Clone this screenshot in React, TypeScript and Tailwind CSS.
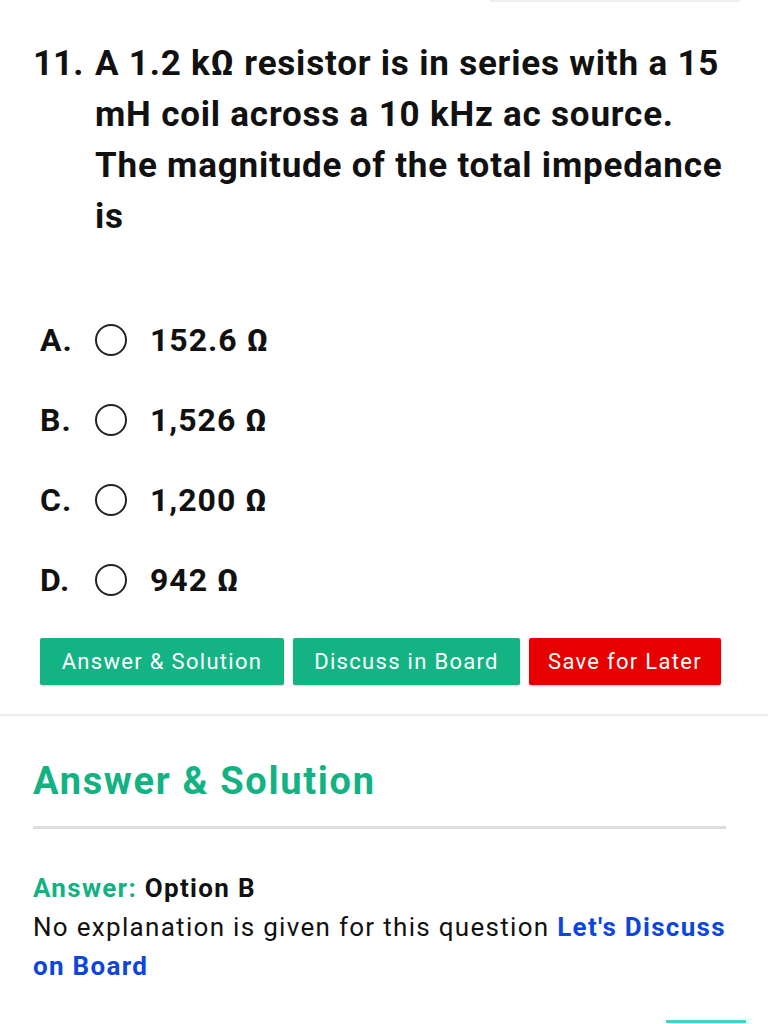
import React from 'react';

const OPTIONS = [
  { key: 'A', label: '152.6 Ω' },
  { key: 'B', label: '1,526 Ω' },
  { key: 'C', label: '1,200 Ω' },
  { key: 'D', label: '942 Ω' },
];

export default function App() {
  return (
    <div className="min-h-[1024px] bg-white font-['Roboto','Liberation_Sans',sans-serif] text-[#111] overflow-hidden">
      {/* faint top rule */}
      <div className="flex justify-end pr-[28px]">
        <div className="h-[2px] w-[250px] bg-[#eeeeee]" />
      </div>

      <div className="pl-[33px] pr-[24px] pt-[36px]">
        {/* question */}
        <div className="flex text-[35px] font-bold leading-[51px] tracking-[0.8px]">
          <span className="w-[62px] shrink-0 tracking-normal">11.</span>
          <p>
            A 1.2 kΩ resistor is in series with a 15 mH coil across a 10 kHz ac source. The magnitude of the total impedance is
          </p>
        </div>

        {/* options */}
        <div className="mt-[58px] flex flex-col">
          {OPTIONS.map(o => (
            <div key={o.key} className="flex h-[80px] items-center pl-[7px] text-[32px] font-bold tracking-[1px]">
              <span className="w-[55px]">{o.key}.</span>
              <span className="h-[32px] w-[32px] shrink-0 rounded-full border-[2px] border-[#222]" />
              <span className="ml-[23px]">{o.label}</span>
            </div>
          ))}
        </div>

        {/* action buttons */}
        <div className="mt-[18px] flex gap-[9px] pl-[7px]">
          <button className="h-[47px] w-[244px] rounded-[2px] bg-[#14b383] text-[22px] tracking-[1.3px] text-white shadow-[0_1px_2px_rgba(0,0,0,0.2)]">
            Answer &amp; Solution
          </button>
          <button className="h-[47px] w-[227px] rounded-[2px] bg-[#14b383] text-[22px] tracking-[1.3px] text-white shadow-[0_1px_2px_rgba(0,0,0,0.2)]">
            Discuss in Board
          </button>
          <button className="h-[47px] w-[192px] rounded-[2px] bg-[#e60000] text-[22px] tracking-[1.3px] text-white shadow-[0_1px_2px_rgba(0,0,0,0.2)]">
            Save for Later
          </button>
        </div>
      </div>

      <div className="mt-[29px] h-[2px] w-full bg-[#ececec]" />

      <div className="pl-[33px] pr-[30px]">
        <h2 className="mt-[39px] text-[38px] font-bold leading-[52px] tracking-[1.7px] text-[#12b283]">Answer &amp; Solution</h2>
        <div className="mt-[19px] mr-[12px] h-[3px] bg-[#dedede]" />

        <div className="mt-[40px] text-[26px] leading-[39px] tracking-[1.3px]">
          <p className="font-bold">
            <span className="text-[#12b283]">Answer:</span> Option B
          </p>
          <p>
            No explanation is given for this question{' '}
            <span className="font-bold text-[#0d45dd]">Let's Discuss on Board</span>
          </p>
        </div>
      </div>

      <div className="mt-[34px] flex justify-end pr-[22px]">
        <div className="h-[3px] w-[80px] bg-[#3dd6c6]" />
      </div>
    </div>
  );
}
